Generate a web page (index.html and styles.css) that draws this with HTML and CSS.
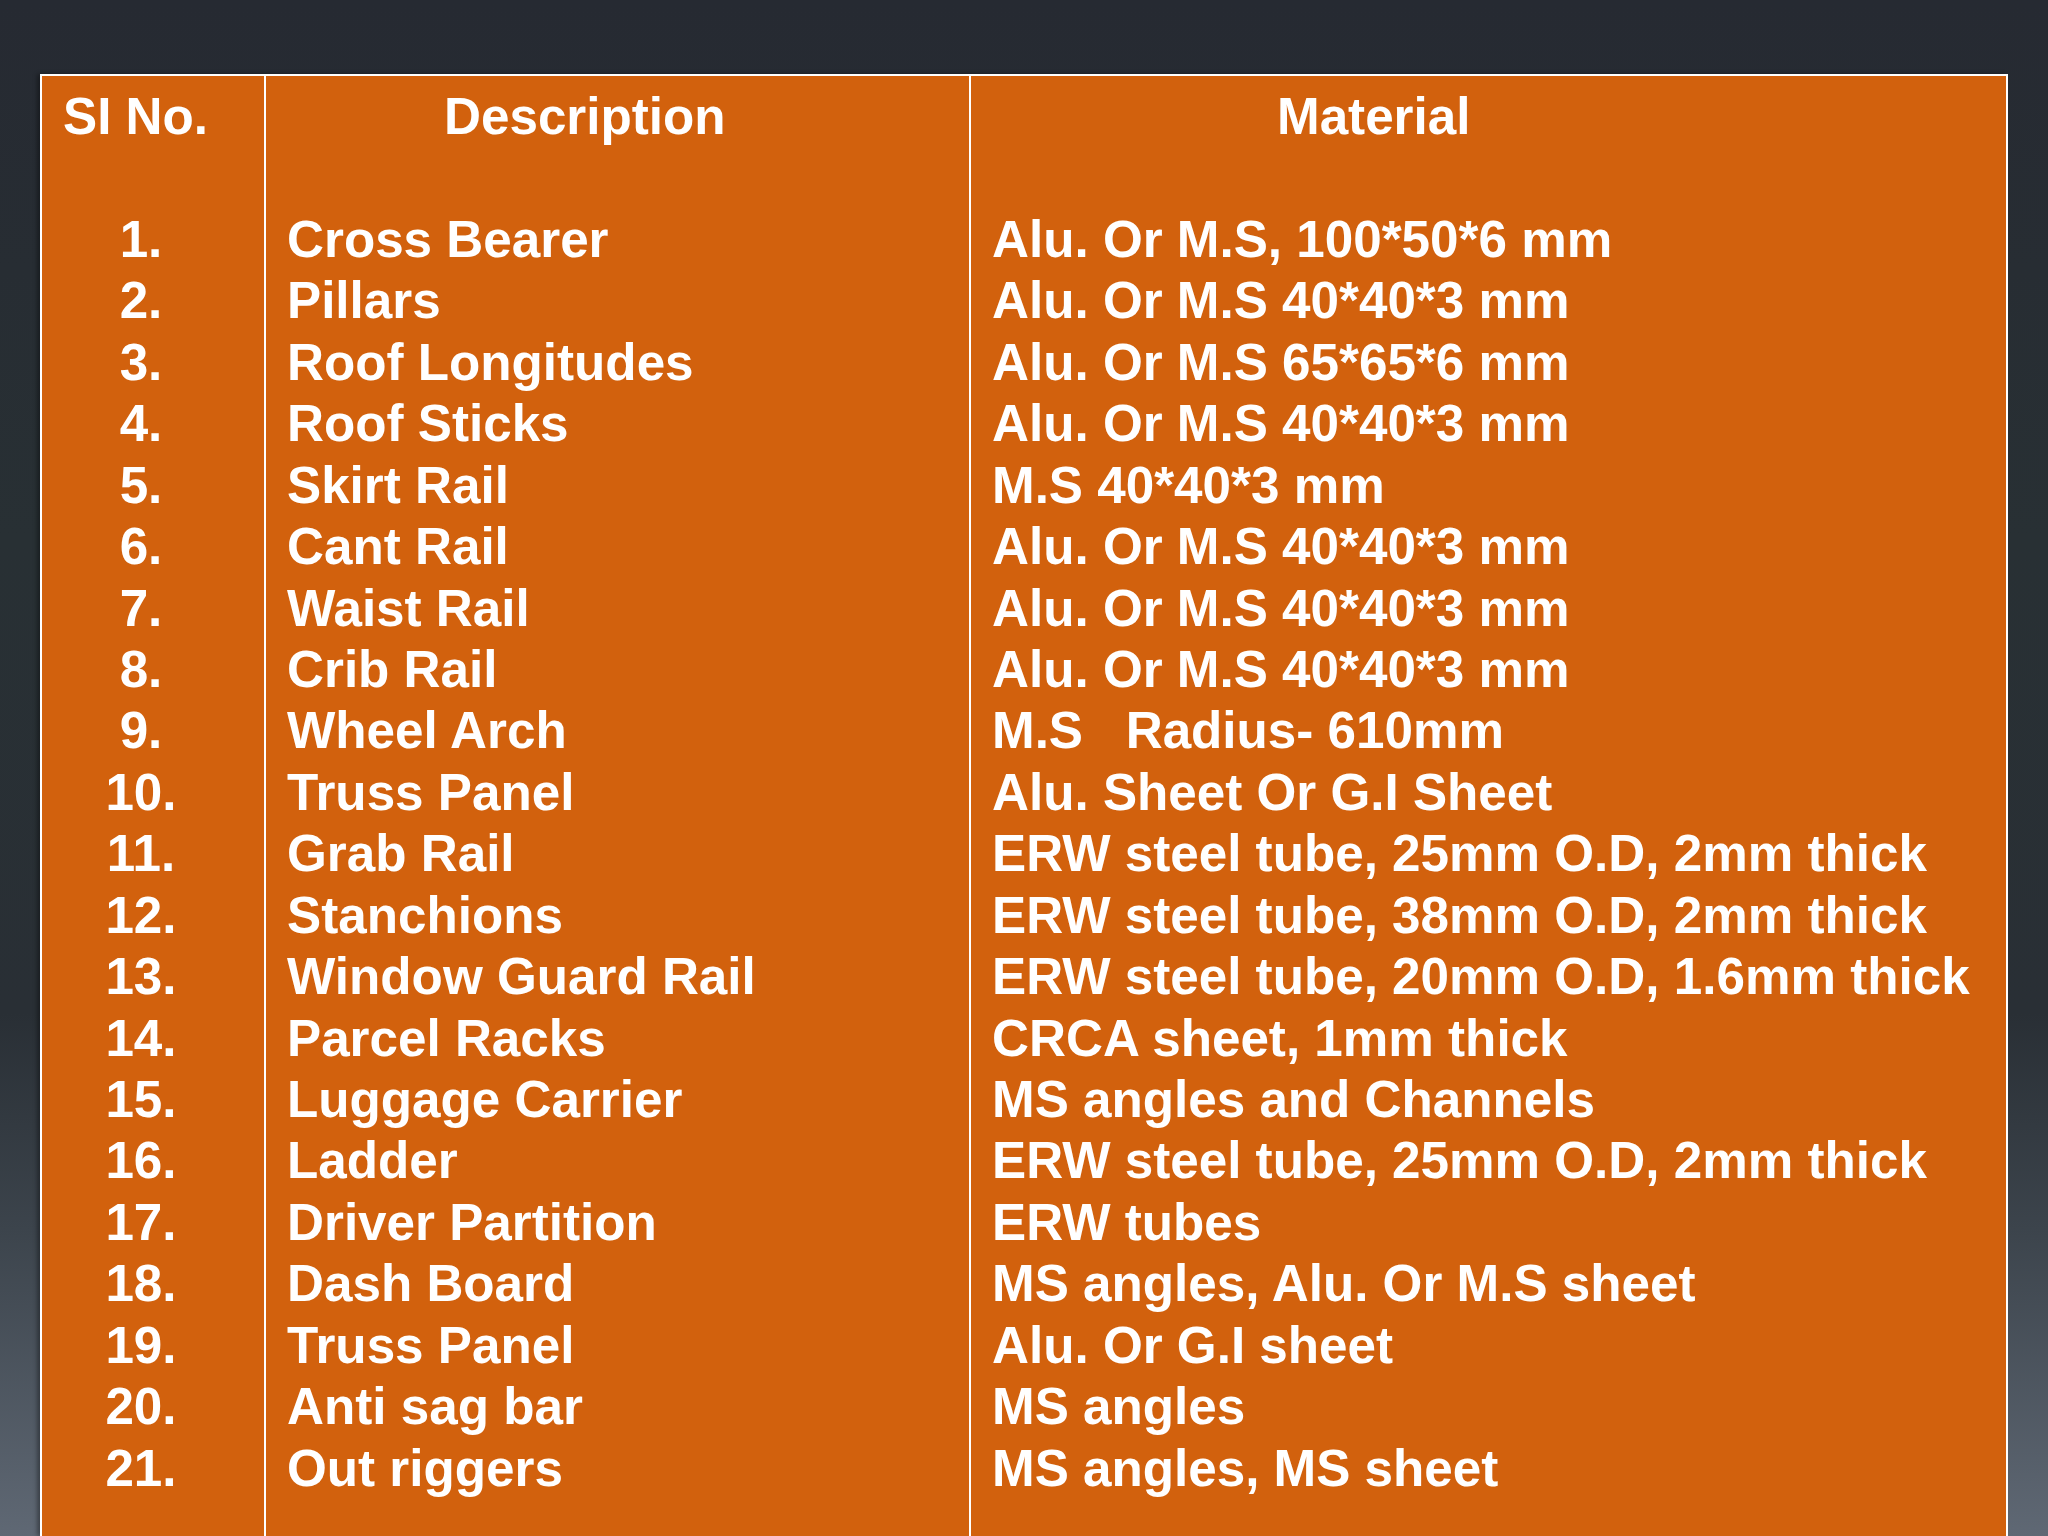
FILE: index.html
```html
<!DOCTYPE html>
<html lang="en">
<head>
<meta charset="utf-8">
<title>Materials</title>
<link rel="stylesheet" href="styles.css">
</head>
<body>
<div class="slide">
  <div class="table">
    <div class="col col-no">
      <div class="head head-no">SI No.</div>
      <div class="blank"></div>
      <div class="line">1.</div>
      <div class="line">2.</div>
      <div class="line">3.</div>
      <div class="line">4.</div>
      <div class="line">5.</div>
      <div class="line">6.</div>
      <div class="line">7.</div>
      <div class="line">8.</div>
      <div class="line">9.</div>
      <div class="line">10.</div>
      <div class="line">11.</div>
      <div class="line">12.</div>
      <div class="line">13.</div>
      <div class="line">14.</div>
      <div class="line">15.</div>
      <div class="line">16.</div>
      <div class="line">17.</div>
      <div class="line">18.</div>
      <div class="line">19.</div>
      <div class="line">20.</div>
      <div class="line">21.</div>
    </div>
    <div class="col col-desc">
      <div class="head head-desc">Description</div>
      <div class="blank"></div>
      <div class="line">Cross Bearer</div>
      <div class="line">Pillars</div>
      <div class="line">Roof Longitudes</div>
      <div class="line">Roof Sticks</div>
      <div class="line">Skirt Rail</div>
      <div class="line">Cant Rail</div>
      <div class="line">Waist Rail</div>
      <div class="line">Crib Rail</div>
      <div class="line">Wheel Arch</div>
      <div class="line">Truss Panel</div>
      <div class="line">Grab Rail</div>
      <div class="line">Stanchions</div>
      <div class="line">Window Guard Rail</div>
      <div class="line">Parcel Racks</div>
      <div class="line">Luggage Carrier</div>
      <div class="line">Ladder</div>
      <div class="line">Driver Partition</div>
      <div class="line">Dash Board</div>
      <div class="line">Truss Panel</div>
      <div class="line">Anti sag bar</div>
      <div class="line">Out riggers</div>
    </div>
    <div class="col col-mat">
      <div class="head head-mat">Material</div>
      <div class="blank"></div>
      <div class="line">Alu. Or M.S, 100*50*6 mm</div>
      <div class="line">Alu. Or M.S 40*40*3 mm</div>
      <div class="line">Alu. Or M.S 65*65*6 mm</div>
      <div class="line">Alu. Or M.S 40*40*3 mm</div>
      <div class="line">M.S 40*40*3 mm</div>
      <div class="line">Alu. Or M.S 40*40*3 mm</div>
      <div class="line">Alu. Or M.S 40*40*3 mm</div>
      <div class="line">Alu. Or M.S 40*40*3 mm</div>
      <div class="line">M.S   Radius- 610mm</div>
      <div class="line">Alu. Sheet Or G.I Sheet</div>
      <div class="line">ERW steel tube, 25mm O.D, 2mm thick</div>
      <div class="line">ERW steel tube, 38mm O.D, 2mm thick</div>
      <div class="line">ERW steel tube, 20mm O.D, 1.6mm thick</div>
      <div class="line">CRCA sheet, 1mm thick</div>
      <div class="line">MS angles and Channels</div>
      <div class="line">ERW steel tube, 25mm O.D, 2mm thick</div>
      <div class="line">ERW tubes</div>
      <div class="line">MS angles, Alu. Or M.S sheet</div>
      <div class="line">Alu. Or G.I sheet</div>
      <div class="line">MS angles</div>
      <div class="line">MS angles, MS sheet</div>
    </div>
  </div>
</div>
</body>
</html>
```

FILE: styles.css
```css
html, body {
  margin: 0;
  padding: 0;
  width: 2048px;
  height: 1536px;
  overflow: hidden;
}

body {
  background: linear-gradient(180deg, #262a32 0%, #283034 35%, #292f35 66%, #3c444c 80%, #5f6874 100%);
  font-family: "Liberation Sans", Arial, sans-serif;
  font-weight: bold;
  color: #ffffff;
}

.slide {
  padding: 74px 40px 0 40px;
  height: 1536px;
  box-sizing: border-box;
  overflow: hidden;
}

.table {
  display: grid;
  grid-template-columns: 222px 705px 1fr;
  border: 2px solid #ffffff;
  border-bottom: none;
  background: #d2610d;
  height: 100%;
  box-sizing: border-box;
  box-shadow: -3px 0 4px rgba(0, 0, 0, 0.35);
}

.col {
  padding-top: 10px;
  font-size: 51.2px;
  line-height: 61.44px;
}

.col-desc,
.col-mat {
  border-left: 2px solid #ffffff;
}

.line,
.head {
  height: 61.44px;
  white-space: pre;
}

.blank {
  height: 61.44px;
}

.col-no .line {
  text-align: center;
  padding-right: 24px;
}

.head-no {
  padding-left: 21px;
}

.col-desc .line {
  padding-left: 21px;
}

.head-desc {
  padding-left: 178px;
}

.col-mat .line {
  padding-left: 21px;
}

.head-mat {
  padding-left: 306px;
}
```
